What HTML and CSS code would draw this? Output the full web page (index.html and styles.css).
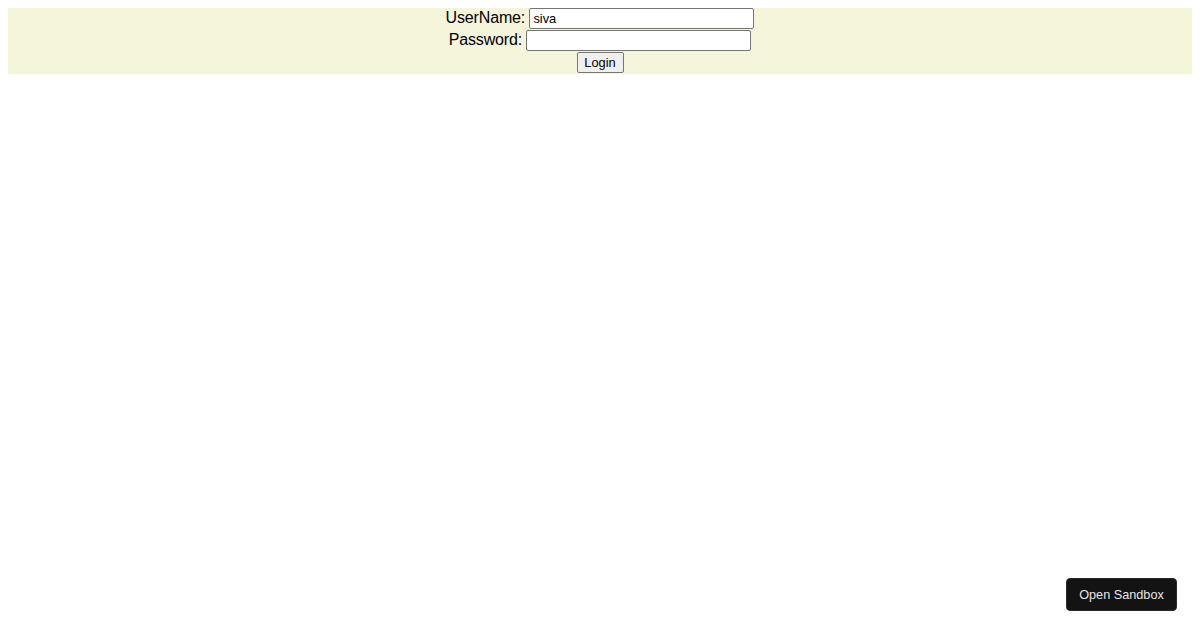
FILE: index.html
```html
<!DOCTYPE html>
<html>
<head>
<meta charset="utf-8">
<link rel="stylesheet" href="styles.css">
</head>
<body>
<div class="login">
  <div class="row">UserName: <input class="field" type="text" value="siva"></div>
  <div class="row">Password: <input class="field" type="password"></div>
  <div class="row"><button class="btn">Login</button></div>
</div>
<button class="sandbox">Open Sandbox</button>
</body>
</html>
```
FILE: styles.css
```css
body {
  margin: 8px;
  font-family: "Liberation Sans", Arial, sans-serif;
  font-size: 16px;
  color: #000;
  background: #fff;
}
.login {
  background: #f5f5dc;
  text-align: center;
}
.row {
  height: 22px;
  line-height: 20px;
  letter-spacing: -0.15px;
}
.field {
  box-sizing: border-box;
  width: 225px;
  height: 21px;
  font: 12.8px "Liberation Sans", Arial, sans-serif;
  letter-spacing: 0;
  border: 1px solid #767676;
  border-radius: 2px;
  padding: 1px 3px;
  vertical-align: top;
  margin: 0;
  background: #fff;
}
.btn {
  box-sizing: border-box;
  height: 21px;
  width: 47px;
  font: 12.8px "Liberation Sans", Arial, sans-serif;
  letter-spacing: 0;
  border: 1px solid #767676;
  border-radius: 2px;
  background: #efefef;
  padding: 0 6px;
  vertical-align: top;
  margin: 0;
  color: #000;
}
.sandbox {
  position: fixed;
  right: 23px;
  bottom: 19px;
  width: 111px;
  height: 33px;
  background: #131313;
  color: #e6e6e6;
  border: 1px solid #2a2a2a;
  border-radius: 4px;
  font: 12.7px "Liberation Sans", Arial, sans-serif;
  padding: 0;
}
```
